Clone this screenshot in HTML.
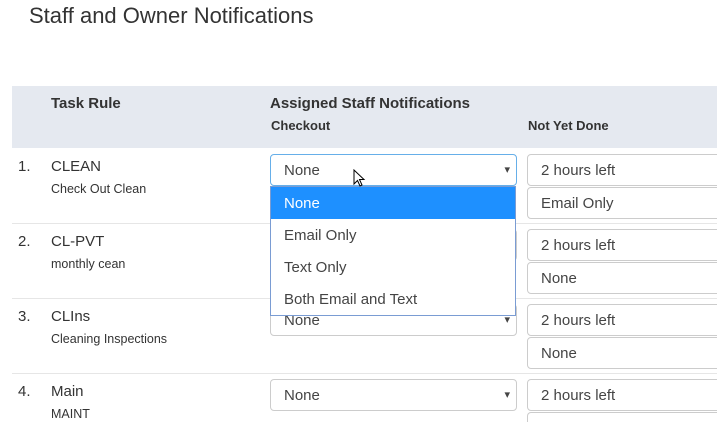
<!DOCTYPE html>
<html style="height:422px;overflow:hidden"><head><style>
*{box-sizing:border-box;margin:0;padding:0}
body{width:717px;height:422px;overflow:hidden;background:#fff;font-family:"Liberation Sans",sans-serif;color:#333;position:relative}
.a{position:absolute;white-space:nowrap}
.box{position:absolute;border:1px solid #ccc;border-radius:4px;background:#fff;font-size:15px;color:#444;padding-left:13px;line-height:32px;height:32px;overflow:hidden}
.sel{left:270px;width:247px}
.sel:after{content:"▾";position:absolute;right:6px;top:0;font-size:11px;color:#444;line-height:30px}
.r{left:527px;width:200px}
.line{position:absolute;left:12px;width:705px;height:1px;background:#e6e6e6}
.dd div{height:32px;line-height:34px;padding-left:13px}
</style></head><body>
<div class="a" style="left:29px;top:3px;font-size:22px;color:#333">Staff and Owner Notifications</div>
<div class="a" style="left:12px;top:86px;width:705px;height:62px;background:#e5e9f0"></div>
<div class="a" style="left:51px;top:95px;font-size:15px;font-weight:bold">Task Rule</div>
<div class="a" style="left:270px;top:95px;font-size:15px;font-weight:bold">Assigned Staff Notifications</div>
<div class="a" style="left:271px;top:118px;font-size:13px;font-weight:bold">Checkout</div>
<div class="a" style="left:528px;top:118px;font-size:13px;font-weight:bold">Not Yet Done</div>

<div class="line" style="top:223px"></div>
<div class="line" style="top:298px"></div>
<div class="line" style="top:373px"></div>

<div class="a" style="left:18px;top:158px;font-size:15px">1.</div>
<div class="a" style="left:51px;top:158px;font-size:15px">CLEAN</div>
<div class="a" style="left:51px;top:182px;font-size:12.5px">Check Out Clean</div>
<div class="a" style="left:18px;top:233px;font-size:15px">2.</div>
<div class="a" style="left:51px;top:233px;font-size:15px">CL-PVT</div>
<div class="a" style="left:51px;top:257px;font-size:12.5px">monthly cean</div>
<div class="a" style="left:18px;top:308px;font-size:15px">3.</div>
<div class="a" style="left:51px;top:308px;font-size:15px">CLIns</div>
<div class="a" style="left:51px;top:332px;font-size:12.5px">Cleaning Inspections</div>
<div class="a" style="left:18px;top:383px;font-size:15px">4.</div>
<div class="a" style="left:51px;top:383px;font-size:15px">Main</div>
<div class="a" style="left:51px;top:407px;font-size:12.5px">MAINT</div>

<div class="box sel" style="top:154px;border-color:#66afe9">None</div>
<div class="box sel" style="top:229px">None</div>
<div class="box sel" style="top:304px">None</div>
<div class="box sel" style="top:379px">None</div>

<div class="box r" style="top:154px">2 hours left</div>
<div class="box r" style="top:187px">Email Only</div>
<div class="box r" style="top:229px">2 hours left</div>
<div class="box r" style="top:262px">None</div>
<div class="box r" style="top:304px">2 hours left</div>
<div class="box r" style="top:337px">None</div>
<div class="box r" style="top:379px">2 hours left</div>
<div class="box r" style="top:412px;height:10px;border-bottom:none;border-radius:4px 4px 0 0"></div>

<div class="a dd" style="left:270px;top:186px;width:246px;height:130px;background:#fff;border:1px solid #7a9cd3;font-size:15px;color:#444">
<div style="background:#1e90ff;color:#fff">None</div>
<div>Email Only</div>
<div>Text Only</div>
<div>Both Email and Text</div>
</div>
<svg class="a" style="left:353px;top:169px" width="14" height="20" viewBox="0 0 14 20"><path d="M1 1 L1 15 L4.5 11.5 L7 17 L9 16 L6.5 10.5 L11 10.5 Z" fill="#fff" stroke="#000" stroke-width="1"/></svg>
</body></html>
